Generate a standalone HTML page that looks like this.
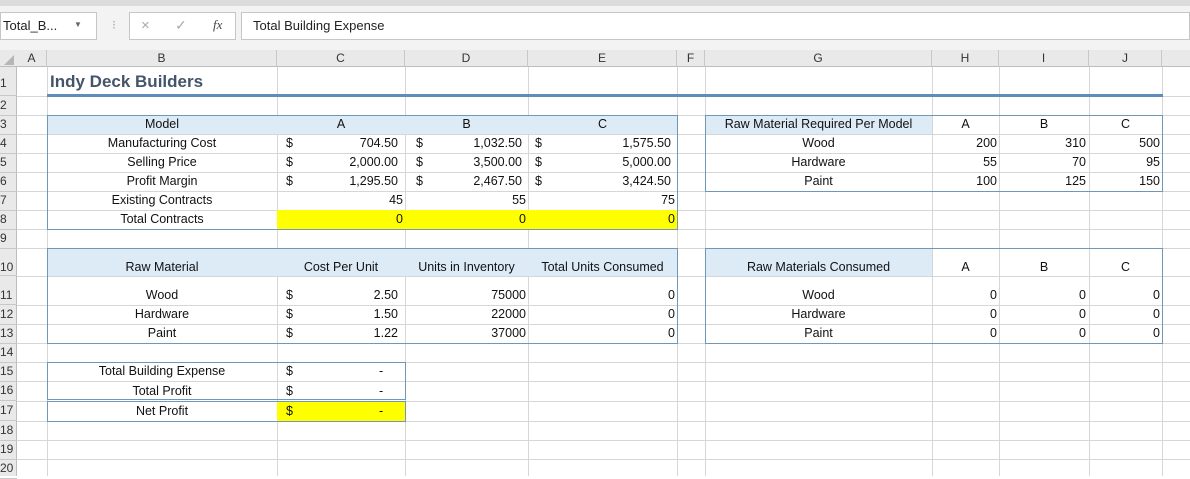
<!DOCTYPE html>
<html><head><meta charset="utf-8"><style>
*{margin:0;padding:0;box-sizing:border-box}
body{width:1190px;height:476px;overflow:hidden;background:#fff;position:relative;font-family:"Liberation Sans",sans-serif;font-size:12.5px;color:#111}
.a{position:absolute}
.t{position:absolute;white-space:nowrap;line-height:19px;height:19px}
.ce{text-align:center}
.r{text-align:right}
.v{position:absolute;width:1px;background:#d6d6d6;top:67px;height:409px}
.h{position:absolute;height:1px;background:#d6d6d6;left:17px;width:1173px}
.box{position:absolute;border:1px solid #6f97b8}
.ch{position:absolute;top:50px;height:17px;line-height:17px;text-align:center;color:#333;font-size:12px;border-right:1px solid #c8c8c8}
.rh{position:absolute;left:0;width:17px;font-size:12px;color:#333;padding-left:0;line-height:19px;border-bottom:1px solid #c8c8c8}
</style></head><body>
<div class="a" style="left:0;top:0;width:1190px;height:50px;background:#f3f3f3"></div>
<div class="a" style="left:0;top:0;width:1190px;height:6px;background:#dcdcdc"></div>
<div class="a" style="left:0;top:12px;width:97px;height:28px;background:#fff;border:1px solid #c6c6c6"></div>
<div class="t" style="left:3px;top:16px;font-size:13px;color:#222">Total_B...</div>
<div class="t" style="left:74px;top:15px;font-size:8px;color:#666">▼</div>
<div class="t" style="left:112px;top:16px;color:#aaa">⁝</div>
<div class="a" style="left:129px;top:12px;width:107px;height:28px;background:#fff;border:1px solid #c6c6c6"></div>
<div class="t" style="left:141px;top:16px;color:#aaa;font-size:15px">×</div>
<div class="t" style="left:175px;top:16px;color:#aaa;font-size:14px">✓</div>
<div class="t" style="left:213px;top:15px;color:#444;font-family:'Liberation Serif',serif;font-style:italic;font-size:13px">fx</div>
<div class="a" style="left:241px;top:12px;width:949px;height:28px;background:#fff;border:1px solid #c6c6c6"></div>
<div class="t" style="left:253px;top:16px;font-size:13px;color:#222">Total Building Expense</div>
<div class="a" style="left:0;top:50px;width:1190px;height:17px;background:#e9e9e9;border-bottom:1px solid #bdbdbd"></div>
<div class="a" style="left:0;top:67px;width:17px;height:409px;background:#e9e9e9;border-right:1px solid #bdbdbd"></div>
<div class="a" style="left:4px;top:55px;width:0;height:0;border-left:10px solid transparent;border-bottom:10px solid #b5b5b5"></div>
<div class="ch" style="left:17px;width:30px">A</div>
<div class="ch" style="left:47px;width:230px">B</div>
<div class="ch" style="left:277px;width:128px">C</div>
<div class="ch" style="left:405px;width:123px">D</div>
<div class="ch" style="left:528px;width:149px">E</div>
<div class="ch" style="left:677px;width:28px">F</div>
<div class="ch" style="left:705px;width:227px">G</div>
<div class="ch" style="left:932px;width:67px">H</div>
<div class="ch" style="left:999px;width:90px">I</div>
<div class="ch" style="left:1089px;width:73px">J</div>
<div class="rh" style="top:67px;height:29px;line-height:32px">1</div>
<div class="rh" style="top:96px">2</div>
<div class="rh" style="top:115px">3</div>
<div class="rh" style="top:134px">4</div>
<div class="rh" style="top:153px">5</div>
<div class="rh" style="top:172px">6</div>
<div class="rh" style="top:191px">7</div>
<div class="rh" style="top:210px">8</div>
<div class="rh" style="top:229px">9</div>
<div class="rh" style="top:248px;height:28px;line-height:38px">10</div>
<div class="rh" style="top:276px;height:29px;line-height:38px">11</div>
<div class="rh" style="top:305px">12</div>
<div class="rh" style="top:324px">13</div>
<div class="rh" style="top:343px">14</div>
<div class="rh" style="top:362px">15</div>
<div class="rh" style="top:381px;height:20px">16</div>
<div class="rh" style="top:401px;height:20px">17</div>
<div class="rh" style="top:421px">18</div>
<div class="rh" style="top:440px">19</div>
<div class="rh" style="top:459px">20</div>
<!-- gridlines -->
<div class="v" style="left:47px"></div><div class="v" style="left:277px"></div><div class="v" style="left:405px"></div><div class="v" style="left:528px"></div><div class="v" style="left:677px"></div><div class="v" style="left:705px"></div><div class="v" style="left:932px"></div><div class="v" style="left:999px"></div><div class="v" style="left:1089px"></div><div class="v" style="left:1162px"></div>
<div class="h" style="top:96px"></div><div class="h" style="top:115px"></div><div class="h" style="top:134px"></div><div class="h" style="top:153px"></div><div class="h" style="top:172px"></div><div class="h" style="top:191px"></div><div class="h" style="top:210px"></div><div class="h" style="top:229px"></div><div class="h" style="top:248px"></div><div class="h" style="top:276px"></div><div class="h" style="top:305px"></div><div class="h" style="top:324px"></div><div class="h" style="top:343px"></div><div class="h" style="top:362px"></div><div class="h" style="top:381px"></div><div class="h" style="top:401px"></div><div class="h" style="top:421px"></div><div class="h" style="top:440px"></div><div class="h" style="top:459px"></div>
<!-- fills -->
<div class="a" style="left:47px;top:115px;width:630px;height:19px;background:#ddebf7"></div>
<div class="a" style="left:705px;top:115px;width:227px;height:19px;background:#ddebf7"></div>
<div class="a" style="left:47px;top:248px;width:630px;height:28px;background:#ddebf7"></div>
<div class="a" style="left:705px;top:248px;width:227px;height:28px;background:#ddebf7"></div>
<div class="a" style="left:277px;top:210px;width:400px;height:19px;background:#ffff00"></div>
<div class="a" style="left:277px;top:401px;width:128px;height:20px;background:#ffff00"></div>
<div class="a" style="left:48px;top:67px;width:229px;height:27px;background:#fff"></div>
<div class="t" style="left:50px;top:71px;font-size:17px;font-weight:bold;color:#44546a;line-height:22px;height:22px">Indy Deck Builders</div>
<div class="a" style="left:47px;top:94px;width:1116px;height:3px;background:#5f8cba"></div>
<div class="box" style="left:47px;top:115px;width:631px;height:115px"></div>
<div class="box" style="left:705px;top:115px;width:458px;height:77px"></div>
<div class="box" style="left:47px;top:248px;width:631px;height:96px"></div>
<div class="box" style="left:705px;top:248px;width:458px;height:96px"></div>
<div class="box" style="left:47px;top:362px;width:359px;height:38px"></div>
<div class="box" style="left:47px;top:401px;width:359px;height:21px"></div>
<div class="t ce" style="left:47px;top:115px;width:230px">Model</div>
<div class="t ce" style="left:277px;top:115px;width:128px">A</div>
<div class="t ce" style="left:405px;top:115px;width:123px">B</div>
<div class="t ce" style="left:528px;top:115px;width:149px">C</div>
<div class="t ce" style="left:47px;top:134px;width:230px">Manufacturing Cost</div>
<div class="t ce" style="left:47px;top:153px;width:230px">Selling Price</div>
<div class="t ce" style="left:47px;top:172px;width:230px">Profit Margin</div>
<div class="t ce" style="left:47px;top:191px;width:230px">Existing Contracts</div>
<div class="t ce" style="left:47px;top:210px;width:230px">Total Contracts</div>
<div class="t" style="left:286px;top:134px">$</div><div class="t" style="left:416px;top:134px">$</div><div class="t" style="left:535px;top:134px">$</div>
<div class="t" style="left:286px;top:153px">$</div><div class="t" style="left:416px;top:153px">$</div><div class="t" style="left:535px;top:153px">$</div>
<div class="t" style="left:286px;top:172px">$</div><div class="t" style="left:416px;top:172px">$</div><div class="t" style="left:535px;top:172px">$</div>
<div class="t r" style="left:277px;top:134px;width:121px">704.50</div><div class="t r" style="left:405px;top:134px;width:117px">1,032.50</div><div class="t r" style="left:528px;top:134px;width:143px">1,575.50</div>
<div class="t r" style="left:277px;top:153px;width:121px">2,000.00</div><div class="t r" style="left:405px;top:153px;width:117px">3,500.00</div><div class="t r" style="left:528px;top:153px;width:143px">5,000.00</div>
<div class="t r" style="left:277px;top:172px;width:121px">1,295.50</div><div class="t r" style="left:405px;top:172px;width:117px">2,467.50</div><div class="t r" style="left:528px;top:172px;width:143px">3,424.50</div>
<div class="t r" style="left:277px;top:191px;width:126px">45</div><div class="t r" style="left:405px;top:191px;width:121px">55</div><div class="t r" style="left:528px;top:191px;width:147px">75</div>
<div class="t r" style="left:277px;top:210px;width:126px">0</div><div class="t r" style="left:405px;top:210px;width:121px">0</div><div class="t r" style="left:528px;top:210px;width:147px">0</div>
<div class="t ce" style="left:705px;top:115px;width:227px">Raw Material Required Per Model</div>
<div class="t ce" style="left:932px;top:115px;width:67px">A</div>
<div class="t ce" style="left:999px;top:115px;width:90px">B</div>
<div class="t ce" style="left:1089px;top:115px;width:73px">C</div>
<div class="t ce" style="left:705px;top:134px;width:227px">Wood</div>
<div class="t ce" style="left:705px;top:153px;width:227px">Hardware</div>
<div class="t ce" style="left:705px;top:172px;width:227px">Paint</div>
<div class="t r" style="left:932px;top:134px;width:65px">200</div><div class="t r" style="left:999px;top:134px;width:87px">310</div><div class="t r" style="left:1089px;top:134px;width:71px">500</div>
<div class="t r" style="left:932px;top:153px;width:65px">55</div><div class="t r" style="left:999px;top:153px;width:87px">70</div><div class="t r" style="left:1089px;top:153px;width:71px">95</div>
<div class="t r" style="left:932px;top:172px;width:65px">100</div><div class="t r" style="left:999px;top:172px;width:87px">125</div><div class="t r" style="left:1089px;top:172px;width:71px">150</div>
<div class="t ce" style="left:47px;top:258px;width:230px">Raw Material</div>
<div class="t ce" style="left:277px;top:258px;width:128px">Cost Per Unit</div>
<div class="t ce" style="left:405px;top:258px;width:123px">Units in Inventory</div>
<div class="t ce" style="left:528px;top:258px;width:149px">Total Units Consumed</div>
<div class="t ce" style="left:47px;top:286px;width:230px">Wood</div>
<div class="t ce" style="left:47px;top:305px;width:230px">Hardware</div>
<div class="t ce" style="left:47px;top:324px;width:230px">Paint</div>
<div class="t" style="left:286px;top:286px">$</div><div class="t" style="left:286px;top:305px">$</div><div class="t" style="left:286px;top:324px">$</div>
<div class="t r" style="left:277px;top:286px;width:121px">2.50</div><div class="t r" style="left:277px;top:305px;width:121px">1.50</div><div class="t r" style="left:277px;top:324px;width:121px">1.22</div>
<div class="t r" style="left:405px;top:286px;width:121px">75000</div><div class="t r" style="left:405px;top:305px;width:121px">22000</div><div class="t r" style="left:405px;top:324px;width:121px">37000</div>
<div class="t r" style="left:528px;top:286px;width:147px">0</div><div class="t r" style="left:528px;top:305px;width:147px">0</div><div class="t r" style="left:528px;top:324px;width:147px">0</div>
<div class="t ce" style="left:705px;top:258px;width:227px">Raw Materials Consumed</div>
<div class="t ce" style="left:932px;top:258px;width:67px">A</div>
<div class="t ce" style="left:999px;top:258px;width:90px">B</div>
<div class="t ce" style="left:1089px;top:258px;width:73px">C</div>
<div class="t ce" style="left:705px;top:286px;width:227px">Wood</div>
<div class="t ce" style="left:705px;top:305px;width:227px">Hardware</div>
<div class="t ce" style="left:705px;top:324px;width:227px">Paint</div>
<div class="t r" style="left:932px;top:286px;width:65px">0</div><div class="t r" style="left:999px;top:286px;width:87px">0</div><div class="t r" style="left:1089px;top:286px;width:71px">0</div>
<div class="t r" style="left:932px;top:305px;width:65px">0</div><div class="t r" style="left:999px;top:305px;width:87px">0</div><div class="t r" style="left:1089px;top:305px;width:71px">0</div>
<div class="t r" style="left:932px;top:324px;width:65px">0</div><div class="t r" style="left:999px;top:324px;width:87px">0</div><div class="t r" style="left:1089px;top:324px;width:71px">0</div>
<div class="t ce" style="left:47px;top:362px;width:230px">Total Building Expense</div>
<div class="t ce" style="left:47px;top:382px;width:230px">Total Profit</div>
<div class="t ce" style="left:47px;top:402px;width:230px">Net Profit</div>
<div class="t" style="left:286px;top:362px">$</div><div class="t" style="left:286px;top:382px">$</div><div class="t" style="left:286px;top:402px">$</div>
<div class="t" style="left:379px;top:362px">-</div><div class="t" style="left:379px;top:382px">-</div><div class="t" style="left:379px;top:402px">-</div>
</body></html>
